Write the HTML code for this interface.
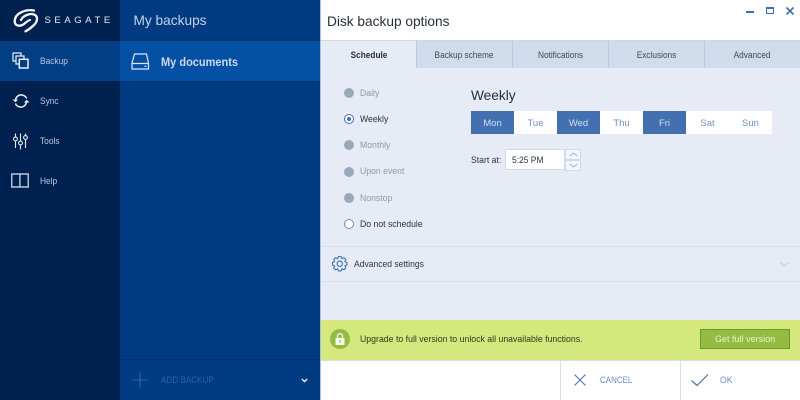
<!DOCTYPE html>
<html><head><meta charset="utf-8">
<style>
html,body{margin:0;padding:0;width:800px;height:400px;overflow:hidden;background:#fff}
body{position:relative;font-family:"Liberation Sans",sans-serif;filter:blur(0.35px)}
.a{position:absolute}
.t{position:absolute;white-space:nowrap;line-height:14px;height:14px;transform-origin:0 50%}
svg{position:absolute;overflow:visible}
.tab{position:absolute;top:41px;height:27px;background:#d0dcec;border-left:1px solid #b9c9dd;box-sizing:border-box;text-align:center;font-size:9px;line-height:29px;color:#3d4a57}
.tab span{display:inline-block;transform:scaleX(.92)}
.day{position:absolute;top:111px;height:23px;width:43px;text-align:center;font-size:9.5px;line-height:26px;color:#6f8fc0;background:#fff}
.day.on{background:#4270b0;color:#d5e0f0}
.r{position:absolute;left:344px;width:10px;height:10px;border-radius:50%;background:#9aa9b9}
.rt{font-size:9.5px;transform:scaleX(.913);color:#8f9aa6;left:360px}
.nav{font-size:9.5px;transform:scaleX(.88);color:#b9c9df;left:40px}
</style></head><body>
<!-- sidebar -->
<div class="a" style="left:0;top:0;width:120px;height:400px;background:#00204f"></div>
<div class="a" style="left:0;top:41px;width:120px;height:40px;background:#013e83"></div>
<!-- middle -->
<div class="a" style="left:120px;top:0;width:200px;height:400px;background:#003a80"></div>
<div class="a" style="left:120px;top:40px;width:200px;height:1px;background:#00346f"></div>
<div class="a" style="left:120px;top:41px;width:200px;height:40px;background:#0350a4"></div>
<div class="a" style="left:120px;top:359px;width:200px;height:1px;background:#002f6b"></div>
<!-- logo -->
<svg style="left:0;top:0" width="48" height="36" viewBox="0 0 48 36" fill="none" stroke="#f2f5f9" stroke-linecap="round">
<path d="M34 10.500C26 9 15 13 14.700 21C14.500 26 20 27 24 24C26 22.300 28 20.500 30 20" stroke-width="2.300"/>
<path d="M21 20C23 15.500 30 13 34 14.500C38 16 38 21 34 25C31 28 28 30 25.500 31.300" stroke-width="2.300"/>
</svg>
<div class="t" style="left:44.500px;top:14px;font-size:9.500px;letter-spacing:3.600px;color:#e6ebf2">SEAGATE</div>
<!-- nav icons -->
<svg style="left:12px;top:52px" width="17" height="17" viewBox="0 0 17 17" fill="none" stroke="#e8eef6" stroke-width="1.200">
<path d="M9 4V1H1V9H4"/><path d="M12 7V4H4V12H7"/><rect x="7.300" y="7.300" width="8.700" height="8.700" stroke-width="1.500"/>
</svg>
<div class="t nav" style="top:54.500px">Backup</div>
<svg style="left:12px;top:93px" width="18" height="16" viewBox="0 0 18 16" fill="none" stroke="#eef2f8" stroke-width="1.500">
<path d="M3.500 7C4 3.500 7 1.500 10 2C12.500 2.400 14 4 14.600 5.500"/><path d="M14.500 9C14 12.500 11 14.500 8 14C5.500 13.600 4 12 3.400 10.500"/>
<path d="M0.500 6.500H6L3.500 9.300Z" fill="#eef2f8" stroke="none"/><path d="M12 9.500H17.500L14.700 6.800Z" fill="#eef2f8" stroke="none"/>
</svg>
<div class="t nav" style="top:94.500px">Sync</div>
<svg style="left:13px;top:133px" width="15" height="17" viewBox="0 0 15 17" fill="none" stroke="#e8eef6" stroke-width="1.100">
<path d="M2.500 0.500V4M2.500 8V15M7.500 0.500V8M7.500 12V16.500M12.500 0.500V2.500M12.500 6.500V15"/>
<circle cx="2.500" cy="6" r="1.900"/><circle cx="7.500" cy="10" r="1.900"/><circle cx="12.500" cy="4.500" r="1.900"/>
</svg>
<div class="t nav" style="top:134.500px">Tools</div>
<svg style="left:11px;top:173px" width="18" height="15" viewBox="0 0 18 15" fill="none" stroke="#dfe6f0" stroke-width="1.200">
<path d="M0.800 1H8.900V14H0.800ZM8.900 1H17.200V14H8.900Z"/>
</svg>
<div class="t nav" style="top:174.500px">Help</div>
<!-- middle content -->
<div class="t" style="left:133.500px;top:14px;font-size:13.700px;color:#c5d3e6">My backups</div>
<svg style="left:131px;top:53px" width="19" height="17" viewBox="0 0 19 17" fill="none" stroke="#dfe8f3" stroke-width="1.200">
<path d="M3.500 1H15.500L17.500 10V16H1V10Z"/><path d="M1.200 10.500H17.300" stroke-width="1.300"/><path d="M13.500 13.300H15.500"/>
</svg>
<div class="t" style="left:160.500px;top:55px;font-size:12px;transform:scaleX(.917);font-weight:bold;color:#ccd9ea">My documents</div>
<svg style="left:132px;top:372px" width="16" height="16" viewBox="0 0 16 16" stroke="#3c659f" stroke-width="1.100"><path d="M8 0.500V15.500M0.500 8H15.500"/></svg>
<div class="t" style="left:160.500px;top:373.500px;font-size:9.500px;transform:scaleX(.855);color:#30609f">ADD BACKUP</div>
<svg style="left:300.500px;top:377.500px" width="7" height="5" viewBox="0 0 7 5" fill="none" stroke="#dfe8f3" stroke-width="1.500"><path d="M0.800 1L3.500 3.600L6.200 1"/></svg>
<!-- right panel -->
<div class="a" style="left:320px;top:0;width:1px;height:400px;background:#a9c0e0;z-index:3"></div>
<div class="a" style="left:321px;top:41px;width:479px;height:279px;background:#e6ebf5"></div>
<div class="a" style="left:321px;top:40px;width:479px;height:1px;background:#cdd6e2"></div>
<div class="t" style="left:327px;top:13.500px;font-size:13.700px;line-height:16px;height:16px;color:#27303a">Disk backup options</div>
<!-- window controls -->
<div class="a" style="left:746px;top:11px;width:8px;height:2px;background:#3f6fb0"></div>
<div class="a" style="left:766px;top:7px;border:1px solid #3f6fb0;border-top-width:2px;box-sizing:content-box;width:6px;height:4px"></div>
<svg style="left:786px;top:6.500px" width="8" height="8" viewBox="0 0 8 8" stroke="#3f6fb0" stroke-width="1.600"><path d="M0.500 0.500L7.500 7.500M7.500 0.500L0.500 7.500"/></svg>
<!-- tabs -->
<div class="tab" style="left:321px;width:96px;background:#e6ebf5;border:0;color:#27303a;font-weight:bold"><span>Schedule</span></div>
<div class="tab" style="left:416px;width:96px"><span>Backup scheme</span></div>
<div class="tab" style="left:512px;width:96px"><span>Notifications</span></div>
<div class="tab" style="left:608px;width:96px"><span>Exclusions</span></div>
<div class="tab" style="left:704px;width:96px"><span>Advanced</span></div>
<!-- radios -->
<div class="r" style="top:88px"></div><div class="t rt" style="top:86.500px">Daily</div>
<div class="r" style="top:114px;background:#fff;box-sizing:border-box;border:1px solid #3f6fb0"></div>
<div class="a" style="left:347px;top:117px;width:4px;height:4px;border-radius:50%;background:#3f6fb0"></div>
<div class="t rt" style="top:112.500px;color:#2b3440">Weekly</div>
<div class="r" style="top:140px"></div><div class="t rt" style="top:138.500px">Monthly</div>
<div class="r" style="top:167px"></div><div class="t rt" style="top:165px">Upon event</div>
<div class="r" style="top:193px"></div><div class="t rt" style="top:191.500px">Nonstop</div>
<div class="r" style="top:219px;background:#fff;box-sizing:border-box;border:1px solid #7e8b99"></div>
<div class="t rt" style="top:217.500px;color:#2b3440">Do not schedule</div>
<!-- weekly -->
<div class="t" style="left:471px;top:88px;font-size:13.700px;line-height:16px;height:16px;color:#27303a">Weekly</div>
<div class="day on" style="left:471px">Mon</div>
<div class="day" style="left:514px">Tue</div>
<div class="day on" style="left:557px">Wed</div>
<div class="day" style="left:600px">Thu</div>
<div class="day on" style="left:643px">Fri</div>
<div class="day" style="left:686px">Sat</div>
<div class="day" style="left:729px">Sun</div>
<!-- start at -->
<div class="t" style="left:471px;top:153.500px;font-size:9.500px;transform:scaleX(.91);color:#2b3440">Start at:</div>
<div class="a" style="left:505px;top:149px;width:60px;height:21px;box-sizing:border-box;border:1px solid #cfdbec;background:#fff"></div>
<div class="t" style="left:511.500px;top:154px;font-size:9.500px;transform:scaleX(.89);color:#2b3440">5:25 PM</div>
<div class="a" style="left:565px;top:149px;width:16px;height:11px;box-sizing:border-box;border:1px solid #cfdbec;background:#f2f5fa"></div>
<div class="a" style="left:565px;top:160px;width:16px;height:11px;box-sizing:border-box;border:1px solid #cfdbec;background:#f2f5fa"></div>
<svg style="left:569px;top:152px" width="9" height="16" viewBox="0 0 9 16" fill="none" stroke="#a7b3c2" stroke-width="1"><path d="M0.800 4L4.500 1L8.200 4M0.800 12L4.500 15L8.200 12"/></svg>
<!-- advanced settings -->
<div class="a" style="left:321px;top:246px;width:479px;height:1px;background:#d6e0ee"></div>
<div class="a" style="left:321px;top:281px;width:479px;height:1px;background:#d6e0ee"></div>
<svg style="left:332.200px;top:256.200px" width="15.500" height="15.500" viewBox="0 0 16 16" fill="none" stroke="#3f6fb0" stroke-width="1.100">
<polygon points="6.680,.52 9.320,.52 10.180,2.730 12.360,1.780 14.220,3.640 13.270,5.820 15.480,6.680 15.480,9.320 13.270,10.180 14.220,12.360 12.360,14.220 10.180,13.270 9.320,15.480 6.680,15.480 5.820,13.270 3.640,14.220 1.780,12.360 2.730,10.180 .52,9.320 .52,6.680 2.730,5.820 1.780,3.640 3.640,1.780 5.820,2.730"/><circle cx="8" cy="8" r="2.800"/>
</svg>
<div class="t" style="left:354px;top:258px;font-size:9.500px;transform:scaleX(.9);color:#2b3440">Advanced settings</div>
<svg style="left:780px;top:262px" width="9" height="5" viewBox="0 0 9 5" fill="none" stroke="#c4cfdd" stroke-width="1"><path d="M0.500 0.500L4.500 4L8.500 0.500"/></svg>
<!-- upgrade bar -->
<div class="a" style="left:321px;top:320px;width:479px;height:40px;background:#d4e87d"></div>
<div class="a" style="left:321px;top:360px;width:479px;height:1px;background:#d7dde6"></div>
<div class="a" style="left:330px;top:329px;width:20px;height:20px;border-radius:50%;background:#93ba43"></div>
<svg style="left:335px;top:332px" width="10" height="14" viewBox="0 0 10 14"><path d="M2.500 6V3.800C2.500 1 7.500 1 7.500 3.800V6" fill="none" stroke="#f4f8e8" stroke-width="1.300"/><rect x="0.500" y="6" width="9" height="7" fill="#f4f8e8"/><rect x="4.300" y="8.300" width="1.400" height="2.200" fill="#93ba43"/></svg>
<div class="t" style="left:360px;top:332.500px;font-size:9.500px;transform:scaleX(.92);color:#2e3a1e">Upgrade to full version to unlock all unavailable functions.</div>
<div class="a" style="left:700px;top:329px;width:90px;height:20px;box-sizing:border-box;background:#94bc42;border:1px solid #6f9a2a"></div>
<div class="t" style="left:715px;top:332.500px;font-size:9.500px;transform:scaleX(.95);color:#e9f2d2">Get full version</div>
<!-- footer -->
<div class="a" style="left:559.500px;top:361px;width:1px;height:39px;background:#d7dee8"></div>
<div class="a" style="left:679.500px;top:361px;width:1px;height:39px;background:#d7dee8"></div>
<svg style="left:574px;top:374px" width="12" height="12" viewBox="0 0 12 12" stroke="#4a76b4" stroke-width="1.100"><path d="M0.500 0.500L11.500 11.500M11.500 0.500L0.500 11.500"/></svg>
<div class="t" style="left:600px;top:373.500px;font-size:9.500px;transform:scaleX(.84);color:#6f8fc0">CANCEL</div>
<svg style="left:691px;top:374px" width="18" height="13" viewBox="0 0 18 13" fill="none" stroke="#4a76b4" stroke-width="1.200"><path d="M0.500 6.500L6 11.500L17 0.500"/></svg>
<div class="t" style="left:720px;top:373.500px;font-size:9.500px;transform:scaleX(.92);color:#6f8fc0">OK</div>
</body></html>
